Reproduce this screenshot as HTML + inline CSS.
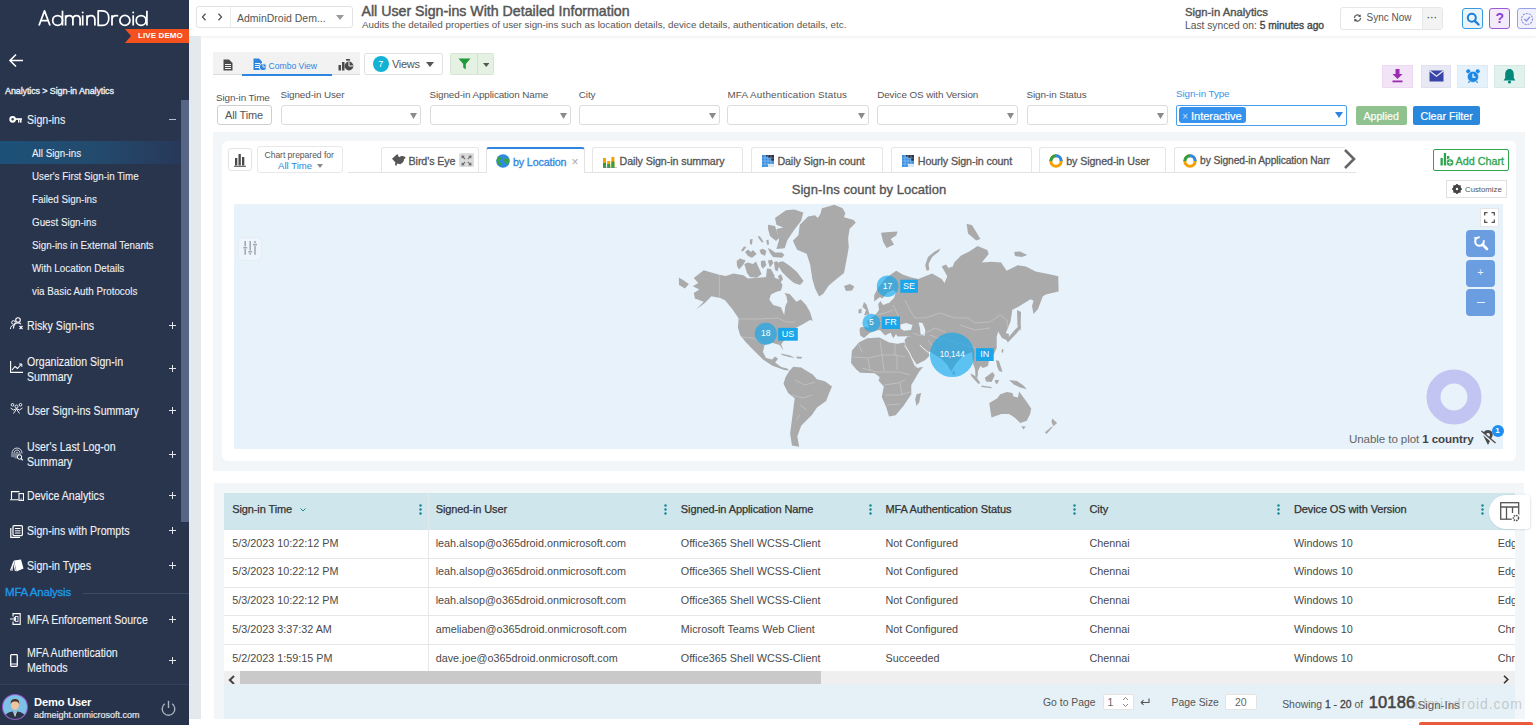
<!DOCTYPE html>
<html><head><meta charset="utf-8">
<style>
*{box-sizing:border-box;margin:0;padding:0}
html,body{width:1536px;height:725px;overflow:hidden;background:#fff;font-family:"Liberation Sans",sans-serif;color:#333}
.a{position:absolute;white-space:nowrap}
#sb{position:absolute;left:0;top:0;width:189px;height:725px;background:#29354d;color:#f2f4f7}
#sb .mi{position:absolute;left:27px;margin-top:1px;font-size:12.5px;transform:scaleX(0.848);transform-origin:0 0;color:#f0f2f5;line-height:15px;-webkit-text-stroke:0.1px #f0f2f5}
#sb .si{position:absolute;left:32px;font-size:11.7px;transform:scaleX(0.84);transform-origin:0 0;color:#eef1f5;line-height:12px;-webkit-text-stroke:0.1px #eef1f5}
#sb .pl{position:absolute;left:168.8px;width:7px;height:7px;margin-top:0.5px}
#sb .pl:before{content:"";position:absolute;left:0;top:3px;width:7px;height:1px;background:#e3e6ec}
#sb .pl:after{content:"";position:absolute;left:3px;top:0;width:1px;height:7px;background:#e3e6ec}
#sb svg.ic{position:absolute;left:9px}

.fl{font-size:9.9px;color:#555;line-height:12px;letter-spacing:-0.1px}
.dd{top:105.4px;height:20px;border:1px solid #dcdcdc;border-radius:3px;background:#fff}

.tt{font-size:10.7px;line-height:12px;letter-spacing:-0.1px}

.th{font-size:11px;color:#333;-webkit-text-stroke:0.25px #333;line-height:12px;letter-spacing:-0.1px}
.td{font-size:10.8px;color:#4a4a4a;line-height:13px;margin-top:-0.8px}
.ft{font-size:10.4px;color:#555;line-height:12px;margin-top:0.8px}
</style></head><body>

<!-- SIDEBAR -->
<div id="sb">
  <svg class="a" style="left:0;top:0" width="189" height="30" viewBox="0 0 189 30"><g fill="none" stroke="#fff" stroke-width="1.75" stroke-linecap="butt" stroke-linejoin="round">
<path d="M39 25.5 L44.5 10.9 L50 25.5 M41.2 20.5 H47.8"/>
<circle cx="57.6" cy="20.45" r="4.9"/><path d="M62.5 10.7 V25.5"/>
<path d="M65.6 15.2 V25.5 M65.6 19.6 C65.6 16.9 67.2 15.5 69.3 15.5 C71.4 15.5 72.9 16.9 72.9 19.6 V25.5 M72.9 19.6 C72.9 16.9 74.5 15.5 76.5 15.5 C78.6 15.5 80.1 16.9 80.1 19.6 V25.5"/>
<path d="M82.7 15.3 V25.5"/>
<path d="M87 15.3 V25.5 M87 19.8 C87 17 88.8 15.5 91 15.5 C93.3 15.5 94.9 17 94.9 19.8 V25.5"/>
<path d="M98.2 10.9 V25.4 H102.3 C106.4 25.4 108.8 22.4 108.8 18.15 C108.8 13.9 106.4 10.9 102.3 10.9 Z"/>
<path d="M112 15.3 V25.5 M112 19.6 C112 17 113.8 15.5 116 15.5 L118.2 15.8"/>
<circle cx="124.9" cy="20.45" r="5"/>
<path d="M133.2 15.3 V25.5"/>
<circle cx="141.1" cy="20.45" r="4.9"/><path d="M146.9 10.7 V25.5"/>
</g><circle cx="82.7" cy="12.6" r="1" fill="#fff"/><circle cx="133.2" cy="12.6" r="1" fill="#fff"/></svg>
  <svg class="a" style="left:125px;top:29px" width="64" height="14"><polygon points="0,0 64,0 64,14 0,14 6,7" fill="#f4511e"/></svg>
  <div class="a" style="left:138px;top:31px;font-size:8px;font-weight:700;color:#fff;line-height:10px;letter-spacing:0.1px">LIVE DEMO</div>
  <svg class="a" style="left:8px;top:53px" width="16" height="15" viewBox="0 0 16 15"><path d="M8 1.5 L2 7.5 L8 13.5 M2 7.5 H15" stroke="#fff" stroke-width="1.6" fill="none"/></svg>
  <div class="a" style="left:5px;top:85.5px;font-size:9px;font-weight:400;-webkit-text-stroke:0.35px #e9edf2;color:#e9edf2;letter-spacing:-0.12px;line-height:10px">Analytics &gt; Sign-in Analytics</div>
  <!-- scrollbar -->
  <div class="a" style="left:181px;top:100px;width:8px;height:422px;background:#566583"></div>

  <!-- Sign-ins -->
  <svg class="a" style="left:0;top:110px" width="30" height="16" viewBox="0 110 30 16"><circle cx="12.65" cy="119.35" r="2.3" fill="none" stroke="#fff" stroke-width="2.1"/><rect x="14.8" y="118.2" width="7.1" height="1.7" fill="#fff"/><rect x="18" y="119.5" width="1.4" height="3.1" fill="#fff"/><rect x="20" y="119.5" width="1.5" height="3.1" fill="#fff"/></svg>
  <div class="mi" style="top:112px">Sign-ins</div>
  <div class="a" style="left:168.5px;top:118.8px;width:7.5px;height:1.1px;background:#b9bfca"></div>
  <div class="a" style="left:0;top:141px;width:181px;height:23px;background:linear-gradient(90deg,#1d5179 0%,#234a6c 55%,#28385a 100%)"></div>
  <div class="si" style="top:147px">All Sign-ins</div>
  <div class="si" style="top:170px">User's First Sign-in Time</div>
  <div class="si" style="top:193px">Failed Sign-ins</div>
  <div class="si" style="top:216px">Guest Sign-ins</div>
  <div class="si" style="top:239px">Sign-ins in External Tenants</div>
  <div class="si" style="top:262px">With Location Details</div>
  <div class="si" style="top:285px">via Basic Auth Protocols</div>

  <div class="mi" style="top:318px">Risky Sign-ins</div>
  <div class="pl" style="top:321px"></div>
  <div class="mi" style="top:353.7px">Organization Sign-in<br>Summary</div>
  <div class="pl" style="top:364px"></div>
  <div class="mi" style="top:403px">User Sign-ins Summary</div>
  <div class="pl" style="top:406px"></div>
  <div class="mi" style="top:439.3px">User's Last Log-on<br>Summary</div>
  <div class="pl" style="top:450px"></div>
  <div class="mi" style="top:488px">Device Analytics</div>
  <div class="pl" style="top:491px"></div>
  <div class="mi" style="top:523px">Sign-ins with Prompts</div>
  <div class="pl" style="top:526px"></div>
  <div class="mi" style="top:558px">Sign-in Types</div>
  <div class="pl" style="top:561px"></div>
  <div class="a" style="left:5px;top:585px;font-size:11.5px;color:#1e9bea;-webkit-text-stroke:0.3px #1e9bea;line-height:14px;letter-spacing:-0.2px">MFA Analysis</div>
  <div class="a" style="left:83px;top:593px;width:106px;height:1px;background:#3d4a63"></div>
  <div class="mi" style="top:612.2px">MFA Enforcement Source</div>
  <div class="pl" style="top:615px"></div>
  <div class="mi" style="top:645px">MFA Authentication<br>Methods</div>
  <div class="pl" style="top:656px"></div>

  <!-- footer -->
  <div class="a" style="left:0;top:684px;width:189px;height:41px;background:#27334b;border-top:1px solid #34405a"></div>
</div>


<!-- sidebar icons -->
<svg class="a" style="left:10px;top:317px" width="14" height="13" viewBox="0 0 14 13"><circle cx="8" cy="3" r="2.3" fill="none" stroke="#fff" stroke-width="1.1"/><path d="M3.5 11.5 C3.5 7.5 5.5 6 8 6 C9.5 6 10.5 6.5 11 7.2" fill="none" stroke="#fff" stroke-width="1.1"/><circle cx="3.5" cy="5.5" r="1.8" fill="none" stroke="#fff" stroke-width="1"/><path d="M0.5 12 C0.5 9.5 1.8 8.5 3.5 8.5" fill="none" stroke="#fff" stroke-width="1"/><path d="M9.5 9 L12.5 12 M12.5 9 L9.5 12" stroke="#fff" stroke-width="1.1"/></svg>
<svg class="a" style="left:10px;top:361px" width="13" height="12" viewBox="0 0 13 12"><path d="M0.6 0 V11.4 H13" stroke="#fff" stroke-width="1.1" fill="none"/><path d="M2 9 L5 5.5 L7.5 7.5 L11.5 3" stroke="#fff" stroke-width="1.1" fill="none"/><path d="M9 3 H11.8 V5.8" stroke="#fff" stroke-width="1" fill="none"/></svg>
<svg class="a" style="left:10px;top:403px" width="13" height="11" viewBox="0 0 13 11"><circle cx="2.5" cy="1.8" r="1.3" fill="none" stroke="#fff" stroke-width="0.9"/><circle cx="6.5" cy="3.5" r="1.5" fill="none" stroke="#fff" stroke-width="0.9"/><circle cx="10.5" cy="1.8" r="1.3" fill="none" stroke="#fff" stroke-width="0.9"/><path d="M0.5 5 L3.5 7 L6.5 5.5 L9.5 7 L12.5 5 M3.5 10.5 L6.5 6 L9.5 10.5" stroke="#fff" stroke-width="0.9" fill="none"/></svg>
<svg class="a" style="left:10.5px;top:446.5px" width="12" height="14" viewBox="0 0 12 14"><path d="M6 1 C3 1 1 3.5 1 6.5 V10 M3 10.5 V6.5 C3 4.5 4.3 3 6 3 C7.7 3 9 4.5 9 6.5 V9 M5 11.5 V6.5 C5 5.7 5.5 5 6 5 C6.5 5 7 5.7 7 6.5 V10 M11 6.5 C11 3.5 9 1 6 1" stroke="#dfe3ea" stroke-width="0.9" fill="none"/><circle cx="8.5" cy="10" r="2.2" fill="#29354d" stroke="#fff" stroke-width="1"/><path d="M10 11.5 L11.8 13.3" stroke="#fff" stroke-width="1.2"/></svg>
<svg class="a" style="left:9.5px;top:491px" width="14" height="10" viewBox="0 0 14 10"><path d="M1.5 8 V0.6 H9.5 M0 8.8 H8.5" stroke="#fff" stroke-width="1.1" fill="none"/><rect x="9" y="2.6" width="4.5" height="6.8" fill="none" stroke="#fff" stroke-width="1.1"/><path d="M10.5 8 H12" stroke="#fff" stroke-width="0.8"/></svg>
<svg class="a" style="left:10px;top:525px" width="13" height="13" viewBox="0 0 13 13"><rect x="3" y="0.6" width="9.4" height="10" rx="1" fill="none" stroke="#fff" stroke-width="1.2"/><path d="M5 3.5 H10.5 M5 5.8 H10.5 M5 8 H10.5" stroke="#fff" stroke-width="1"/><path d="M0.8 3 V12.4 H10" stroke="#fff" stroke-width="1.2" fill="none"/></svg>
<svg class="a" style="left:9.5px;top:559px" width="14" height="13" viewBox="0 0 14 13"><path d="M4 1.5 L11 0.5 L13.5 9.5 L6.5 12.5Z" fill="#fff"/><path d="M0.5 11.5 L3.5 3.5 L5.5 12" stroke="#fff" stroke-width="1.1" fill="none"/><path d="M2 12 L2.8 7" stroke="#fff" stroke-width="0.8"/></svg>
<svg class="a" style="left:9.5px;top:612.5px" width="11" height="12" viewBox="0 0 11 12"><path d="M3 3.5 V0.6 H10.2 V11.4 H3 V8.5" stroke="#fff" stroke-width="1.1" fill="none"/><path d="M0 6 H5.5 M3.8 4.2 L5.7 6 L3.8 7.8" stroke="#fff" stroke-width="1.1" fill="none"/><rect x="5.5" y="3.5" width="2.5" height="5" fill="none" stroke="#fff" stroke-width="0.8"/></svg>
<svg class="a" style="left:9.5px;top:653.5px" width="8" height="13" viewBox="0 0 8 13"><rect x="0.7" y="0.7" width="6.6" height="11.6" rx="0.8" fill="none" stroke="#fff" stroke-width="1.3"/><path d="M0.7 10 H7.3" stroke="#fff" stroke-width="1"/></svg>
<!-- sidebar footer -->
<svg class="a" style="left:1px;top:693px" width="28" height="28" viewBox="0 0 28 28"><defs><clipPath id="av"><circle cx="14" cy="14" r="12"/></clipPath></defs><circle cx="14" cy="14" r="13" fill="#9a57c9"/><circle cx="14" cy="14" r="12" fill="#7dc1e6"/><g clip-path="url(#av)"><path d="M3 28 C3 20 8 18.5 14 18.5 C20 18.5 25 20 25 28Z" fill="#2b3447"/><path d="M12 18.5 L14 24 L16 18.5Z" fill="#fff"/><path d="M13.4 19 L14 23 L14.6 19Z" fill="#3a6db0"/><ellipse cx="14" cy="12" rx="4" ry="5" fill="#f0c4a0"/><path d="M9.8 11 C9.5 7 11.5 6 14 6 C16.5 6 18.5 7 18.2 11 C17.5 9 16 8.5 14 8.5 C12 8.5 10.5 9 9.8 11Z" fill="#4a3322"/></g></svg>
<div class="a" style="left:34px;top:695.5px;font-size:11.2px;font-weight:700;color:#fff;line-height:12px;letter-spacing:-0.2px">Demo User</div>
<div class="a" style="left:34px;top:710px;font-size:9px;color:#e3e7ee;-webkit-text-stroke:0.2px #e3e7ee;line-height:10px;letter-spacing:0px">admeight.onmicrosoft.com</div>
<svg class="a" style="left:160px;top:700px" width="17" height="17" viewBox="0 0 17 17"><path d="M4.8 3.8 A6.3 6.3 0 1 0 12.2 3.8" stroke="#a9b1bf" stroke-width="1.4" fill="none"/><path d="M8.5 0.8 V8" stroke="#a9b1bf" stroke-width="1.4"/></svg>

<!-- TOPBAR -->
<div class="a" style="left:189px;top:0;width:1347px;height:36px;background:#fff;box-shadow:0 1px 3px rgba(0,0,0,.08)"></div>
<div class="a" style="left:189px;top:36px;width:12px;height:682.8px;background:#e3e9ec"></div>


<!-- TOPBAR CONTENT -->
<div class="a" style="left:195.5px;top:6px;width:157px;height:22px;border:1px solid #e3e3e3;border-radius:3px;background:#fff"></div>
<div class="a" style="left:229.5px;top:7px;width:1px;height:20px;background:#ececec"></div>
<svg class="a" style="left:201px;top:13px" width="6" height="8" viewBox="0 0 6 8"><path d="M4.5 0.8 L1.5 4 L4.5 7.2" stroke="#555" stroke-width="1.3" fill="none"/></svg>
<svg class="a" style="left:217px;top:13px" width="6" height="8" viewBox="0 0 6 8"><path d="M1.5 0.8 L4.5 4 L1.5 7.2" stroke="#555" stroke-width="1.3" fill="none"/></svg>
<div class="a" style="left:237px;top:12px;font-size:10.5px;color:#555;line-height:12px">AdminDroid Dem...</div>
<svg class="a" style="left:336px;top:15px" width="8" height="5"><polygon points="0,0 8,0 4,5" fill="#9a9a9a"/></svg>
<div class="a" style="left:361.5px;top:3px;font-size:14.2px;font-weight:400;-webkit-text-stroke:0.45px #555;color:#555;line-height:16px;letter-spacing:0px">All User Sign-ins With Detailed Information</div>
<div class="a" style="left:362px;top:20px;font-size:9.82px;color:#555;line-height:11px;letter-spacing:0px;margin-top:-0.6px">Audits the detailed properties of user sign-ins such as location details, device details, authentication details, etc.</div>

<div class="a" style="left:1185px;top:5.8px;font-size:11.3px;font-weight:400;-webkit-text-stroke:0.4px #555;color:#555;line-height:13px;letter-spacing:0px">Sign-in Analytics</div>
<div class="a" style="left:1185px;top:20.3px;font-size:10.25px;color:#555;line-height:12px">Last synced on: <span style="-webkit-text-stroke:0.35px #444;color:#444">5 minutes ago</span></div>
<div class="a" style="left:1339.5px;top:7px;width:103px;height:22.5px;border:1px solid #e6e6e6;border-radius:3px;background:#fff"></div>
<div class="a" style="left:1421.5px;top:8px;width:20px;height:20.5px;background:#f3f3f3;border-left:1px solid #e8e8e8"></div>
<svg class="a" style="left:1353px;top:13px" width="9" height="10" viewBox="0 0 9 10"><path d="M7.5 5 A3 3 0 0 1 2 6.8 M1.5 5 A3 3 0 0 1 7 3.2" stroke="#555" stroke-width="1.2" fill="none"/><polygon points="7.5,1.2 7.8,4.2 5,3.6" fill="#555"/><polygon points="1.5,8.8 1.2,5.8 4,6.4" fill="#555"/></svg>
<div class="a" style="left:1366.5px;top:12px;font-size:10px;color:#555;line-height:12px">Sync Now</div>
<div class="a" style="left:1427px;top:14px;font-size:9px;font-weight:700;color:#555;line-height:8px;letter-spacing:0.5px">&middot;&middot;&middot;</div>
<div class="a" style="left:1462px;top:8.2px;width:20.7px;height:20.7px;border:1px solid #3a9ad9;border-radius:3px;background:#e9f4fb"></div>
<svg class="a" style="left:1465.5px;top:11.5px" width="14" height="14" viewBox="0 0 14 14"><circle cx="5.8" cy="5.8" r="4" stroke="#1e7fd6" stroke-width="2" fill="none"/><path d="M8.8 8.8 L12.5 12.5" stroke="#1e7fd6" stroke-width="2.4" stroke-linecap="round"/></svg>
<div class="a" style="left:1489.3px;top:8.2px;width:20.7px;height:20.7px;border:1px solid #9b59d6;border-radius:3px;background:#f3ebfb"></div>
<div class="a" style="left:1495.5px;top:10px;font-size:14px;font-weight:700;color:#8e3fd0;line-height:16px">?</div>
<div class="a" style="left:1516.7px;top:8.2px;width:21px;height:20.7px;border:1px solid #9aa0e8;border-radius:3px;background:#f1f1fc"></div>
<svg class="a" style="left:1520px;top:12px" width="14" height="14" viewBox="0 0 14 14"><circle cx="7" cy="7" r="5.5" stroke="#8c93e3" stroke-width="1.1" fill="none" stroke-dasharray="2 1"/><path d="M4.3 7 L6.3 9 L9.8 5" stroke="#8c93e3" stroke-width="1.3" fill="none"/></svg>

<!-- VIEW TABS -->
<div class="a" style="left:213px;top:52px;width:147px;height:23px;background:#f2f2f2;border-bottom:1px solid #dcdcdc"></div>
<div class="a" style="left:242px;top:73.5px;width:90px;height:2px;background:#2f86e0"></div>
<svg class="a" style="left:223px;top:58.5px" width="10" height="12" viewBox="0 0 10 12"><path d="M0.5 0.5 H6 L9.5 4 V11.5 H0.5Z" fill="#4a4a4a"/><path d="M2 5.5 H8 M2 7.5 H8 M2 9.5 H8" stroke="#f2f2f2" stroke-width="1"/></svg>
<svg class="a" style="left:252.5px;top:58px" width="14" height="13" viewBox="0 0 14 13"><path d="M0.5 0.5 H6 L9 3.5 V12 H0.5Z" fill="#2f86e0"/><path d="M2 5.5 H7 M2 7.5 H6 M2 9.5 H6" stroke="#f2f2f2" stroke-width="1"/><circle cx="10" cy="9" r="3.7" fill="#2f86e0" stroke="#f2f2f2" stroke-width="1"/><path d="M10 9 V6 M10 9 H13" stroke="#f2f2f2" stroke-width="0.9"/></svg>
<div class="a" style="left:268.5px;top:61px;font-size:8.6px;color:#2f86e0;line-height:10px">Combo View</div>
<svg class="a" style="left:338px;top:58px" width="16" height="13" viewBox="0 0 16 13"><rect x="0.5" y="7" width="2.5" height="5.5" fill="#4a4a4a"/><rect x="4" y="4" width="2.5" height="8.5" fill="#4a4a4a"/><circle cx="11" cy="8" r="4.4" fill="#4a4a4a"/><path d="M11 8 V4 M11 8 H15" stroke="#f2f2f2" stroke-width="1"/><rect x="8" y="1" width="4" height="1.6" fill="#4a4a4a"/></svg>

<div class="a" style="left:363.5px;top:52.5px;width:79px;height:22.5px;border:1px solid #e2e2e2;border-radius:2px;background:#fff"></div>
<div class="a" style="left:372.5px;top:55.5px;width:16.5px;height:16.5px;border-radius:50%;background:#13b2d4;color:#fff;font-size:9px;text-align:center;line-height:16.5px">7</div>
<div class="a" style="left:392px;top:57px;font-size:11px;color:#555;line-height:13px;letter-spacing:-0.3px;margin-top:0.8px">Views</div>
<svg class="a" style="left:425.5px;top:61.5px" width="8" height="5"><polygon points="0,0 8,0 4,5" fill="#555"/></svg>

<div class="a" style="left:450px;top:53.3px;width:43.5px;height:21.5px;border:1px solid #d6e6d3;border-radius:2px;background:#e5f1e3"></div>
<div class="a" style="left:477.3px;top:54px;width:1px;height:20px;background:#d3e2d0"></div>
<svg class="a" style="left:457.5px;top:57.5px" width="13" height="12" viewBox="0 0 13 12"><path d="M0.5 0.5 H12.5 L7.8 6 V11.5 L5.2 9.5 V6 Z" fill="#1f9a3a"/></svg>
<svg class="a" style="left:482.5px;top:63px" width="6.5" height="4"><polygon points="0,0 6.5,0 3.25,4" fill="#555"/></svg>

<!-- ACTION ICONS -->
<div class="a" style="left:1381.5px;top:64.5px;width:31.5px;height:23px;background:#f2e4f6;border:1px solid #ecdaf1"></div>
<svg class="a" style="left:1391px;top:69px" width="13" height="14" viewBox="0 0 13 14"><path d="M4.5 0 H8.5 V5 H11.5 L6.5 10 L1.5 5 H4.5Z" fill="#9b2bb0"/><rect x="1.5" y="11.5" width="10" height="1.8" fill="#9b2bb0"/></svg>
<div class="a" style="left:1421px;top:64.5px;width:30px;height:23px;background:#e8e9f5;border:1px solid #dfe1f0"></div>
<svg class="a" style="left:1428.5px;top:70px" width="15" height="12" viewBox="0 0 15 12"><rect x="0.5" y="0.5" width="14" height="11" fill="#3a45a8"/><path d="M0.5 0.8 L7.5 6.2 L14.5 0.8" stroke="#e8e9f5" stroke-width="1.3" fill="none"/></svg>
<div class="a" style="left:1457.3px;top:64.5px;width:30.7px;height:23px;background:#e5f1fb;border:1px solid #dbeaf6"></div>
<svg class="a" style="left:1465.5px;top:68.8px" width="14" height="14.5" viewBox="0 0 14 14.5"><circle cx="2.3" cy="2.3" r="2.1" fill="#1e88e5"/><circle cx="11.7" cy="2.3" r="2.1" fill="#1e88e5"/><path d="M2.5 13.8 L4 11.5 M11.5 13.8 L10 11.5" stroke="#1e88e5" stroke-width="1.3"/><circle cx="7" cy="7.8" r="5.6" fill="#1e88e5" stroke="#e5f1fb" stroke-width="0.6"/><path d="M7 4.8 V8.2 H9.5" stroke="#fff" stroke-width="1.2" fill="none"/></svg>
<div class="a" style="left:1494.2px;top:64.5px;width:30.5px;height:23px;background:#e1f1ee;border:1px solid #d6e9e5"></div>
<svg class="a" style="left:1503px;top:68px" width="13" height="16" viewBox="0 0 13 16"><path d="M6.5 1 C3.5 1 2.2 3.5 2.2 6.5 V10 L0.6 12.5 H12.4 L10.8 10 V6.5 C10.8 3.5 9.5 1 6.5 1Z" fill="#00897b"/><circle cx="6.5" cy="14" r="1.6" fill="#00897b"/></svg>


<!-- FILTERS -->
<div class="a fl" style="left:216px;top:91.5px">Sign-in Time</div>
<div class="a" style="left:216.5px;top:105.4px;width:55px;height:20px;border:1px solid #cfcfcf;border-radius:3px;background:#fff"></div>
<div class="a" style="left:225px;top:109px;font-size:11px;color:#555;line-height:13px;letter-spacing:-0.15px">All Time</div>
<div class="a fl" style="left:280.5px;top:89px">Signed-in User</div>
<div class="a dd" style="left:280.5px;width:140.8px"></div>
<svg class="a" style="left:410.3px;top:112.5px" width="7" height="6"><polygon points="0,0 7,0 3.5,6" fill="#8a8a8a"/></svg>
<div class="a fl" style="left:429.5px;top:89px">Signed-in Application Name</div>
<div class="a dd" style="left:429.5px;width:141.0px"></div>
<svg class="a" style="left:559.5px;top:112.5px" width="7" height="6"><polygon points="0,0 7,0 3.5,6" fill="#8a8a8a"/></svg>
<div class="a fl" style="left:578.75px;top:89px">City</div>
<div class="a dd" style="left:578.75px;width:140.9px"></div>
<svg class="a" style="left:708.6px;top:112.5px" width="7" height="6"><polygon points="0,0 7,0 3.5,6" fill="#8a8a8a"/></svg>
<div class="a fl" style="left:727.4px;top:89px;letter-spacing:0.18px">MFA Authentication Status</div>
<div class="a dd" style="left:727.4px;width:142.0px"></div>
<svg class="a" style="left:858.4px;top:112.5px" width="7" height="6"><polygon points="0,0 7,0 3.5,6" fill="#8a8a8a"/></svg>
<div class="a fl" style="left:877.2px;top:89px">Device OS with Version</div>
<div class="a dd" style="left:877.2px;width:140.8px"></div>
<svg class="a" style="left:1007.0px;top:112.5px" width="7" height="6"><polygon points="0,0 7,0 3.5,6" fill="#8a8a8a"/></svg>
<div class="a fl" style="left:1026.5px;top:89px">Sign-in Status</div>
<div class="a dd" style="left:1026.5px;width:141.4px"></div>
<svg class="a" style="left:1156.9px;top:112.5px" width="7" height="6"><polygon points="0,0 7,0 3.5,6" fill="#8a8a8a"/></svg>

<div class="a fl" style="left:1176px;top:88px;color:#3d95e8">Sign-in Type</div>
<div class="a" style="left:1175.7px;top:104.5px;width:171px;height:21.5px;border:1px solid #4a9fe8;border-radius:2px;background:#fff"></div>
<div class="a" style="left:1179px;top:106.8px;width:66.5px;height:16.2px;border-radius:3px;background:#3591ee"></div>
<div class="a" style="left:1182.3px;top:110.5px;font-size:10px;color:#cfe3fb;line-height:11px">&times;</div>
<div class="a" style="left:1191px;top:109px;font-size:11.2px;color:#fff;-webkit-text-stroke:0.2px #fff;line-height:12px;letter-spacing:-0.1px;margin-top:0.6px">Interactive</div>
<svg class="a" style="left:1334.5px;top:111.5px" width="8" height="6"><polygon points="0,0 8,0 4,6" fill="#2f86e0"/></svg>
<div class="a" style="left:1356px;top:105.5px;width:51px;height:19.5px;border-radius:2px;background:#8fc28e"></div>
<div class="a" style="left:1363.5px;top:109px;font-size:10.6px;color:#fff;-webkit-text-stroke:0.2px #fff;line-height:12px;margin-top:0.6px">Applied</div>
<div class="a" style="left:1413.3px;top:105.5px;width:66.7px;height:19.5px;border-radius:2px;background:#2a88dc"></div>
<div class="a" style="left:1420.5px;top:109px;font-size:10.7px;color:#fff;-webkit-text-stroke:0.2px #fff;line-height:12px;margin-top:0.6px">Clear Filter</div>


<!-- CHART PANEL -->
<div class="a" style="left:213px;top:132px;width:1312px;height:338.5px;background:#f3f6f8"></div>
<div class="a" style="left:222px;top:141.4px;width:1293.5px;height:320px;background:#fff;border-radius:6px"></div>
<div class="a" style="left:228.3px;top:148.3px;width:24px;height:22.3px;border:1px solid #e4e4e4;border-radius:3px;background:#fff"></div>
<svg class="a" style="left:234px;top:152.5px" width="13" height="14" viewBox="0 0 13 14"><rect x="1" y="5" width="2.3" height="7.5" fill="#4a4a4a"/><rect x="4.5" y="1" width="2.3" height="11.5" fill="#4a4a4a"/><rect x="8" y="4" width="2.3" height="8.5" fill="#4a4a4a"/><rect x="0" y="12.8" width="12" height="1" fill="#4a4a4a"/></svg>
<div class="a" style="left:257.2px;top:145.5px;width:85.6px;height:27.2px;border:1px solid #e8e8e8;border-radius:3px;background:#fff"></div>
<div class="a" style="left:264.5px;top:150px;font-size:8.6px;color:#555;line-height:10px;letter-spacing:-0.05px">Chart prepared for</div>
<div class="a" style="left:278px;top:159.5px;font-size:9.6px;color:#2f86e0;line-height:11px">All Time</div>
<svg class="a" style="left:316.6px;top:163.5px" width="6" height="4"><polygon points="0,0 6,0 3,4" fill="#8a8a8a"/></svg>
<div class="a" style="left:348px;top:171.5px;width:1008px;height:1px;background:#e3e3e3"></div>
<div class="a" style="left:381.4px;top:147.3px;width:97.2px;height:24.5px;background:#fff;border:1px solid #e6e6e6;border-bottom:none;border-radius:3px 3px 0 0"></div>
<svg class="a" style="left:391.5px;top:153.6px" width="14" height="13" viewBox="0 0 14 13"><path d="M0 4.7 L5.3 0 L7 3.2 C8.5 2.5 9.5 2 10.5 2.1 L12.3 2.6 L13.8 3.8 L12 5.3 C12 7 11.5 8.5 8.2 10.2 L5.3 9.6 L4.1 12.3 L2.9 10.2 L3.5 8.4 C2.5 7.8 1.8 6.5 0 4.7Z" fill="#555"/></svg>
<div class="a tt" style="left:408.6px;top:154.5px;color:#555;-webkit-text-stroke:0.3px #555">Bird's Eye</div>
<div class="a" style="left:486px;top:147px;width:98.5px;height:25.5px;background:#fff;border:1px solid #e3e3e3;border-top:2.5px solid #2f86e0;border-bottom:none;border-radius:3px 3px 0 0"></div>
<svg class="a" style="left:495.9px;top:154px" width="14" height="14" viewBox="0 0 14 14"><circle cx="7" cy="7" r="6.8" fill="#2d8be6"/><path d="M3 2.2 C4.5 3 5.5 3.5 5 5.2 C4 6 3.5 7.2 4.5 8.5 C5.5 9.5 5 11 4.5 12.2 C2.5 11 0.8 9 0.5 6.5 C1 4.5 1.8 3 3 2.2Z M8.5 4 C10 4 11 5 12.5 4.5 C13.3 6.5 13 9 11.5 11 C10.5 10.5 9.8 9 9 8.5 C8 8 7.5 6.5 8.5 4Z" fill="#3aa34a"/></svg>
<div class="a tt" style="left:512.9px;top:155.5px;color:#2f86e0;-webkit-text-stroke:0.3px #2f86e0">by Location</div>
<div class="a" style="left:592.2px;top:147.3px;width:151.3px;height:24.5px;background:#fff;border:1px solid #e6e6e6;border-bottom:none;border-radius:3px 3px 0 0"></div>
<svg class="a" style="left:602.6px;top:155px" width="14" height="13" viewBox="0 0 14 13"><rect x="0" y="3" width="3" height="10" fill="#f59f00"/><rect x="0" y="8" width="3" height="5" fill="#2f9e44"/><rect x="4.2" y="6" width="3" height="7" fill="#f59f00"/><rect x="4.2" y="9" width="3" height="4" fill="#2f9e44"/><rect x="8.4" y="2" width="3" height="11" fill="#f59f00"/><rect x="8.4" y="6.5" width="3" height="6.5" fill="#2f9e44"/><rect x="0" y="12.5" width="14" height="0.5" fill="#888"/></svg>
<div class="a tt" style="left:619.6px;top:154.5px;color:#555;-webkit-text-stroke:0.3px #555">Daily Sign-in summary</div>
<div class="a" style="left:750.6px;top:147.3px;width:132.8px;height:24.5px;background:#fff;border:1px solid #e6e6e6;border-bottom:none;border-radius:3px 3px 0 0"></div>
<svg class="a" style="left:761.9px;top:154.7px" width="12" height="12" viewBox="0 0 12 12"><rect width="12" height="12" fill="#d5e6f5"/><path d="M0 0 H12 V9 H6 V12 H0Z" fill="#3b8fe0"/><path d="M4 0 H12 V6 H9 V3 H6 V1.5 H4Z" fill="#27354a"/><path d="M0 3 H12 M0 6 H12 M0 9 H12 M3 0 V12 M6 0 V12 M9 0 V12" stroke="#fff" stroke-width="0.4" opacity="0.7"/></svg>
<div class="a tt" style="left:777.4px;top:154.5px;color:#555;-webkit-text-stroke:0.3px #555">Daily Sign-in count</div>
<div class="a" style="left:890.7px;top:147.3px;width:141.3px;height:24.5px;background:#fff;border:1px solid #e6e6e6;border-bottom:none;border-radius:3px 3px 0 0"></div>
<svg class="a" style="left:902.3px;top:154.7px" width="12" height="12" viewBox="0 0 12 12"><rect width="12" height="12" fill="#d5e6f5"/><path d="M0 0 H12 V9 H6 V12 H0Z" fill="#3b8fe0"/><path d="M4 0 H12 V6 H9 V3 H6 V1.5 H4Z" fill="#27354a"/><path d="M0 3 H12 M0 6 H12 M0 9 H12 M3 0 V12 M6 0 V12 M9 0 V12" stroke="#fff" stroke-width="0.4" opacity="0.7"/></svg>
<div class="a tt" style="left:917.8px;top:154.5px;color:#555;-webkit-text-stroke:0.3px #555">Hourly Sign-in count</div>
<div class="a" style="left:1039.4px;top:147.3px;width:126.8px;height:24.5px;background:#fff;border:1px solid #e6e6e6;border-bottom:none;border-radius:3px 3px 0 0"></div>
<svg class="a" style="left:1049.2px;top:154px" width="14" height="14" viewBox="0 0 14 14"><circle cx="7" cy="7" r="5.2" fill="none" stroke="#f59f00" stroke-width="3"/><path d="M7 1.8 A5.2 5.2 0 0 1 12.2 7" fill="none" stroke="#2d8be6" stroke-width="3"/><path d="M1.8 7 A5.2 5.2 0 0 1 7 1.8" fill="none" stroke="#2f9e44" stroke-width="3"/></svg>
<div class="a tt" style="left:1066.25px;top:154.5px;color:#555;-webkit-text-stroke:0.3px #555">by Signed-in User</div>
<div class="a" style="left:1173.5px;top:147.3px;width:171.5px;height:24.5px;background:#fff;border:1px solid #e6e6e6;border-bottom:none;border-right:none;border-radius:3px 0 0 0;overflow:hidden"></div>
<svg class="a" style="left:1183.0px;top:154px" width="14" height="14" viewBox="0 0 14 14"><circle cx="7" cy="7" r="5.2" fill="none" stroke="#f59f00" stroke-width="3"/><path d="M7 1.8 A5.2 5.2 0 0 1 12.2 7" fill="none" stroke="#2d8be6" stroke-width="3"/><path d="M1.8 7 A5.2 5.2 0 0 1 7 1.8" fill="none" stroke="#2f9e44" stroke-width="3"/></svg>
<div class="a" style="left:1200px;top:154.5px;width:130.3px;overflow:hidden;font-size:10.3px;color:#555;-webkit-text-stroke:0.3px #555;line-height:12px;letter-spacing:-0.1px">by Signed-in Application Name</div>

<div class="a" style="left:458.7px;top:153px;width:15px;height:14.2px;background:#dcdcdc;border-radius:2px"></div>
<svg class="a" style="left:460.5px;top:154.5px" width="11" height="11" viewBox="0 0 11 11"><path d="M1.2 1.2 L4.2 4.2 M9.8 1.2 L6.8 4.2 M9.8 9.8 L6.8 6.8 M1.2 9.8 L4.2 6.8" stroke="#6a6a6a" stroke-width="1.1"/><path d="M0.8 3.5 V0.8 H3.5 M7.5 0.8 H10.2 V3.5 M4.2 4.2 H1.8 V1.8 M6.8 4.2" stroke="none" fill="none"/><polygon points="0.5,0.5 3.8,0.8 0.8,3.8" fill="#6a6a6a"/><polygon points="10.5,0.5 7.2,0.8 10.2,3.8" fill="#6a6a6a"/><polygon points="10.5,10.5 7.2,10.2 10.2,7.2" fill="#6a6a6a"/><polygon points="0.5,10.5 3.8,10.2 0.8,7.2" fill="#6a6a6a"/></svg>
<div class="a" style="left:571.5px;top:156px;font-size:12px;color:#aaa;line-height:12px">&times;</div>
<svg class="a" style="left:1343px;top:148px" width="13" height="22" viewBox="0 0 13 22"><path d="M2 2 L11 11 L2 20" stroke="#666" stroke-width="2.6" fill="none"/></svg>

<div class="a" style="left:1433px;top:148.8px;width:76px;height:22px;border:1.3px solid #2ea44f;border-radius:2px;background:#fff"></div>
<svg class="a" style="left:1440px;top:152px" width="14" height="15" viewBox="0 0 14 15"><rect x="0.5" y="6" width="2.3" height="7.5" fill="#2ea44f"/><rect x="3.8" y="1" width="2.3" height="12.5" fill="#2ea44f"/><rect x="7" y="4" width="2.3" height="9.5" fill="#2ea44f"/><circle cx="10" cy="10.5" r="3.8" fill="#2ea44f" stroke="#fff" stroke-width="0.8"/><path d="M10 8.3 V12.7 M7.8 10.5 H12.2" stroke="#fff" stroke-width="1"/></svg>
<div class="a" style="left:1455.5px;top:154.5px;font-size:10.8px;color:#2ea44f;-webkit-text-stroke:0.3px #2ea44f;line-height:12px">Add Chart</div>
<div class="a" style="left:1445.5px;top:180.2px;width:61px;height:17.4px;border:1px solid #e0e0e0;background:#fff"></div>
<svg class="a" style="left:1451.5px;top:184px" width="10" height="10" viewBox="0 0 10 10"><circle cx="5" cy="5" r="3.2" fill="none" stroke="#444" stroke-width="2"/><path d="M5 0 V10 M0 5 H10 M1.5 1.5 L8.5 8.5 M8.5 1.5 L1.5 8.5" stroke="#444" stroke-width="1.6"/><circle cx="5" cy="5" r="1.2" fill="#fff"/></svg>
<div class="a" style="left:1465px;top:184.5px;font-size:7.8px;color:#555;line-height:9px">Customize</div>

<div class="a" style="left:791.7px;top:182.5px;font-size:13px;color:#555;-webkit-text-stroke:0.35px #555;line-height:14px;letter-spacing:0.05px">Sign-Ins count by Location</div>


<!-- MAP -->
<div class="a" style="left:234.2px;top:204.2px;width:1268.8px;height:245px;background:#e8f2fa"></div>
<svg class="a" style="left:0;top:0" width="1536" height="725" viewBox="0 0 1536 725">
<g fill="#aaaaaa">
<polygon points="760.9,261 765,260.5 766.4,265 763,268.8 761,266"/>
<polygon points="767.8,260.5 772,259.8 773.3,263 770,267.4"/>
<polygon points="774,262 777,261.2 779.5,264 777.5,271.6 775,270"/>
<polygon points="778,276 781,274.3 783,279 780,283.3"/>
<polygon points="796.3,356.4 802.4,357 801,358.7 797,358.5"/>
<polygon points="693.8,278.1 703.7,270.3 719.1,274.8 725.7,275.9 733.5,273.6 743.4,275.3 747.8,278.6 754.4,278.1 758.1,277.8 766,277 767,268.5 771,269 774.7,276 774.3,277.5 779,279.5 782.5,285 781,290.5 776,292 771,294.5 769.3,299.6 773.2,305.1 780.9,307.3 784.2,315 785.3,306.2 787.5,301.8 786.4,296.3 784.5,293 789.7,294.1 796.4,301.8 800.8,299.6 806,305 810,312 812.7,320.7 810,320 802.4,324.6 790.3,330.7 785.7,338.2 781.2,344.3 783.4,350.4 779.6,345.1 772,342.8 764.5,345.1 763,351.9 766,358 772,359.5 775.1,356.4 778.1,358.7 775.1,362.5 781.2,367.1 787.2,368.6 789,370.5 784.2,370.1 772,365.5 763,359.5 753.9,350.4 746.3,342.8 740.2,335.2 737.9,327.6 738.7,318.5 732.6,309.4 725,300.3 720.2,297.9 711.4,296.3 704.8,302.9 696,309.5 703.7,301.8 694.9,298.5 693.8,293 699.3,289.6 692.7,286.3 698.2,283"/>
<polygon points="793.3,366.8 801.2,367.5 813,374.7 816.9,379.2 824.8,381.2 832,386.5 828.7,394.3 826.1,400.9 817,407.4 811.7,415.3 805.1,421.8 801.2,425.8 797.3,436.3 799.2,446.7 792,445.4 790.1,433.6 792,419.2 794.7,398.2 788.1,393 783.5,383.8 785.5,377.3 789.4,370.7"/>
<polygon points="821.9,208.3 834.3,204.8 842.6,208.3 845.3,213.1 844,217.2 853.6,220 855.7,222.8 849.5,229 848.1,238.6 848.8,246.9 847.4,255.2 845.3,266.2 844,273.1 837.1,278.6 828.8,285.5 823.3,293.8 819.1,296.6 815,288.3 812.2,278.6 810.2,264.8 806.7,253.8 797.1,249.7 792.9,240.7 798.4,235.2 799.8,224.8 808.1,216.6 815,215.2 817.8,217.9 820.5,213.8"/>
<polygon points="775,217.9 786,210.3 794.3,209.4 803.3,212.4 801.2,220.7 794.3,229.7 787.4,240 784.7,248.3 776.4,249 779.1,240 776.4,229 783.3,227.6 776.4,224.8"/>
<polygon points="778.8,262 783,261.2 790,266 797,272 803.6,281 800,285 794,283 788,278 782,272 779,267"/>
<polygon points="744.3,264 748,262.6 753,264 756,261.5 758,266 761.6,274 757,277.8 750,277 747,273"/>
<polygon points="736.7,261 740,258.4 745.7,260.5 743,265 739,269.5 737,266"/>
<polygon points="768.1,224.8 775,226 779,238 776,241 770,236 768,229"/>
<polygon points="757.8,236 760,236.5 763.6,242 762,242.6 758.5,238"/>
<polygon points="766.4,240 768.5,239.8 769.1,244.5 767,244.7"/>
<polygon points="749.8,239.5 752.6,239 752,244.7 750,244"/>
<polygon points="741,250.5 744,246.5 746.4,247 743,251.6"/>
<polygon points="745,252 748,249.5 751,252 753,250 756.7,254 752,257.8 748,256"/>
<polygon points="759.5,250 763,248.8 766.4,251 765,255.7 761,254"/>
<polygon points="767.8,248 771,249.5 775,252.5 782,252.5 784.3,255 782,257.8 773,257 770,253"/>
<polygon points="678.9,277.5 683,280 688.8,284.1 685,288.5 679,285"/>
<polygon points="844,286 850,284 854.3,286.5 852,290.5 846,291"/>
<polygon points="864,302 866.5,304.5 868,309 869.5,314 864,315.5 866,310 862.5,307"/>
<polygon points="858.6,309.5 861.5,308.5 861.5,313 858.5,313.5"/>
<polygon points="860.2,335.5 859.5,329.3 861,327 869,327.5 867,321 872,317.5 876,314 879,310 878.3,304 880.5,301 883,305 886,304 889,300 887,296 882,298.5 880,297 874.3,301.4 874.1,295.5 878.3,287.3 886.6,277.6 896.2,270.7 903.1,274.8 911.4,277.6 918.3,279 925.2,276.2 932.1,273.5 941.7,279 944.5,283.1 947.3,276.2 941.7,266.6 945.9,264.5 948.6,268 952.8,266.6 954.2,262.4 961.1,255.5 969.3,251.4 977.6,245.9 987.3,250 988.7,254.1 981.8,262.4 991.4,261.7 1001.1,262.4 1006.6,270.7 1017.6,265.2 1025.9,266.6 1035.6,271.4 1049.4,274.2 1058.3,276.2 1058.6,291.6 1045.7,294.6 1042.7,296.5 1038,309 1033.5,314 1032,306 1033.6,300.7 1030.5,299.2 1018.4,306.8 1012.3,309.8 1010.5,321.7 1005.8,333.1 1009,334 1008.5,341 1002,338 998.1,331.4 996.7,336.9 996.7,347.9 993.5,355 989,360 988,366 983,368 980.5,366 978,371 977.5,378 975.5,376 975,369 973.3,364.5 971.9,352.1 962.2,356.2 955.3,364.5 951.2,371.4 947.1,364.5 941.6,359 929.8,351.4 929.1,356.2 925,360.3 916.7,364.5 911.2,356.2 905.7,345.2 904.5,340 907.5,336.5 913,336 897.5,336.5 896,334 893.3,338.3 890.5,332.8 885,335.5 880,330 876,330.5 869.7,333 864,338"/>
<polygon points="851.9,350.7 858.8,342.4 867.1,338.3 879.5,337.6 889.1,342.4 897.4,343.8 904.3,342.4 907,348 911,356 914.5,364 917,368 923.1,366.8 919,372 915.2,378.6 911.3,385.1 911.3,394.3 903.4,406.1 895.6,415.3 889,416.6 886.4,407.4 881.8,397 883.8,386.5 878.5,380.6 879.8,377.3 874.6,373.3 860.2,372.7 856.3,369.4 851,362.9"/>
<polygon points="916.5,394.3 921.1,393 919.2,402.2 916.5,406.1 915.2,399.6"/>
<polygon points="1020.2,324.5 1021,328 1016,334.1 1007.8,342.4 1006.4,339.7 1014.7,330"/>
<polygon points="1017,310 1021,312 1020.5,331 1017.5,326"/>
<polygon points="940.4,248.6 934.8,251.4 928,256.9 925.2,265.2 926.6,270.7 929.3,270 928.6,263.8 932.1,256.9 939,251.4"/>
<polygon points="881,232.8 889.3,232.1 897.6,231.4 896.2,235.5 890.7,239 894.1,244.5 886.6,247.9 883.1,241.7"/>
<polygon points="966.6,223.8 972.1,225.2 980.4,239 976.2,240.4 968,233.5"/>
<polygon points="1014.2,252 1020,251.4 1027.3,255 1022,256.9 1015,256"/>
<polygon points="989.3,403 997,398.6 1000.3,394.2 1006.9,392 1012.4,393.1 1013.5,396.4 1018,397.5 1019.1,391.4 1023.5,397.5 1026.8,401.9 1031.2,408.5 1030.1,414.1 1026.8,420.7 1020.2,422.9 1014.6,417.4 1009.1,414.1 1001.4,414.1 991.5,417.4 990.4,410.8"/>
<polygon points="1021.3,426.2 1025.7,426.5 1023.5,429.5"/>
<polygon points="1052.2,418.5 1057.1,422.9 1053.3,426.2 1051.5,422"/>
<polygon points="1053.3,426.2 1046.6,433.9 1045,432.3 1051.1,427.3"/>
<polygon points="1009.1,379.9 1016.9,381 1023.5,385.4 1026.8,389.2 1020.2,387.6 1013.5,384.3"/>
<polygon points="984.9,377.7 992.6,372.1 994.8,375.4 991.5,382.1 986,381.5"/>
<polygon points="970.5,373.2 976,376.5 980.4,383.2 978.2,383.7 971.6,376.5"/>
<polygon points="981.5,385.4 991.5,387 991.5,388.3 981.5,386.9"/>
<polygon points="994.8,379.9 999.2,380 997,384.3 995.5,383"/>
<polygon points="996,360 999,361 1002.5,372.1 999,371 997,366"/>
<polygon points="781,353.5 790,355.5 795,358 789,357 782,355"/>
<polygon points="953,371 955,372 954.5,375 952.5,374"/>
<polygon points="1002,349 1003.5,349.5 1003,353 1001.5,352"/>
</g>
<g fill="#e8f2fa">
<polygon points="900.5,324.5 906,323 912.5,325 911,330 904,330.8 900.5,328.5"/>
<polygon points="918.6,322.5 922.5,323 925.4,330 924.5,336 920.5,334 920,328"/>
<polygon points="882,299 887,293 893,290 896,292 894,298 889,303 884,304"/>
<polygon points="928,351.5 932,353 930,356"/>
</g>
<g fill="none" stroke="#e8f2fa" stroke-width="1"><polyline points="904.5,345.5 909,352 915.5,366.5"/><polyline points="919.8,345 924,349 928.3,352.5"/></g>
<g fill="none" stroke="#cdd0d3" stroke-width="0.55">
<polyline points="719.3,275 719.3,298"/>
<polyline points="737,319 760,319 778,318 786,322 795,322"/>
<polyline points="741,337 752,338 760,341 764,345"/>
<polyline points="858,343 862,352"/>
<polyline points="880,340 882,355"/>
<polyline points="895,344 895,355"/>
<polyline points="853,357 868,358 882,355 895,355 905,357"/>
<polyline points="897,355 897,370"/>
<polyline points="868,358 870,370"/>
<polyline points="882,355 884,371"/>
<polyline points="862,368 876,372 900,372 910,375"/>
<polyline points="884,385 898,383 905,380"/>
<polyline points="885,395 900,395 910,392"/>
<polyline points="887,405 900,404"/>
<polyline points="900,383 902,395"/>
<polyline points="915,318 925,318 940,313 955,318 968,318 975,323 990,322 1000,315 1007,320 1008,328"/>
<polyline points="920,336 935,328 945,332"/>
<polyline points="960,325 975,330 990,328"/>
<polyline points="942,338 955,342 965,345 975,348"/>
<polyline points="928,340 935,350"/>
<polyline points="930,335 942,340"/>
<polyline points="913,333 920,336"/>
<polyline points="877,315 885,313 893,310"/>
<polyline points="880,322 888,320 897,318"/>
<polyline points="885,327 893,325 900,322"/>
<polyline points="893,305 898,315 900,322"/>
<polyline points="905,300 910,310 915,318"/>
<polyline points="795,380 805,385 815,382"/>
<polyline points="792,395 803,398 812,395"/>
<polyline points="800,405 807,410"/>
<polyline points="796,420 800,415"/>
<polyline points="980,352 985,360"/>
<polyline points="975,355 982,350"/>
</g>
<circle cx="765.8" cy="333.7" r="11" fill="#0fa8ee" fill-opacity="0.65"/>
<rect x="778.2" y="327.9" width="19.6" height="12.8" fill="#1aa6ea"/>
<circle cx="887.6" cy="286.2" r="10.8" fill="#0fa8ee" fill-opacity="0.65"/>
<rect x="900.3" y="279.7" width="17.6" height="13.1" fill="#1aa6ea"/>
<circle cx="871.4" cy="322.8" r="9" fill="#0fa8ee" fill-opacity="0.65"/>
<rect x="881.7" y="316.6" width="18.3" height="12.4" fill="#1aa6ea"/>
<circle cx="952.2" cy="354.8" r="22.3" fill="#0fa8ee" fill-opacity="0.65"/>
<rect x="976" y="348.2" width="17.7" height="12.8" fill="#1aa6ea"/>
</svg>
<div class="a" style="left:745.8px;top:328.2px;width:40px;text-align:center;font-size:8.6px;color:#fff;line-height:11px">18</div>
<div class="a" style="left:778.2px;top:328.8px;width:19.6px;text-align:center;font-size:9px;color:#fff;line-height:11px">US</div>
<div class="a" style="left:867.6px;top:280.7px;width:40px;text-align:center;font-size:8.6px;color:#fff;line-height:11px">17</div>
<div class="a" style="left:900.3px;top:280.8px;width:17.6px;text-align:center;font-size:9px;color:#fff;line-height:11px">SE</div>
<div class="a" style="left:851.4px;top:317.3px;width:40px;text-align:center;font-size:8.6px;color:#fff;line-height:11px">5</div>
<div class="a" style="left:881.7px;top:317.3px;width:18.3px;text-align:center;font-size:9px;color:#fff;line-height:11px">FR</div>
<div class="a" style="left:932.2px;top:349.3px;width:40px;text-align:center;font-size:8.2px;color:#fff;line-height:11px">10,144</div>
<div class="a" style="left:976.0px;top:349.1px;width:17.7px;text-align:center;font-size:9px;color:#fff;line-height:11px">IN</div>
<div class="a" style="left:238.4px;top:236.5px;width:24px;height:24px;border-radius:5px;background:#eef5fc;border:1px solid #e4ecf4"></div>
<svg class="a" style="left:240px;top:239px" width="20" height="18" viewBox="240 239 20 18"><g stroke="#a3aab3" stroke-width="1.6"><path d="M245.2 241 V246.5 M245.2 249 V254.8 M250.2 241 V250.5 M250.2 253 V254.8 M255 241 V243 M255 246 V254.8"/><path d="M243.2 247.7 H247.2 M248.2 251.7 H252.2 M253 244.6 H257"/></g></svg>
<div class="a" style="left:1480px;top:208px;width:18.8px;height:19px;background:#fff;border:1px solid #e6e6e6"></div>
<svg class="a" style="left:1484px;top:212px" width="11" height="11" viewBox="0 0 11 11"><path d="M0.7 3.5 V0.7 H3.5 M7.5 0.7 H10.3 V3.5 M10.3 7.5 V10.3 H7.5 M3.5 10.3 H0.7 V7.5" stroke="#555" stroke-width="1.3" fill="none"/></svg>
<div class="a" style="left:1466.2px;top:229.9px;width:28.4px;height:27.5px;background:#6b9de1;border-radius:4px"></div>
<svg class="a" style="left:1472.5px;top:235px" width="16" height="16" viewBox="0 0 16 16"><circle cx="6.5" cy="6.5" r="4.3" stroke="#fff" stroke-width="2" fill="none" stroke-dasharray="20 5"/><path d="M9.5 9.5 L14 14" stroke="#fff" stroke-width="2.6" stroke-linecap="round"/><polygon points="1,2 4.5,2.5 2,5.5" fill="#fff"/></svg>
<div class="a" style="left:1466.2px;top:259.7px;width:28.4px;height:27px;background:#6b9de1;border-radius:4px"></div>
<div class="a" style="left:1466.2px;top:265px;width:28.4px;text-align:center;font-size:11px;color:#e8f0fb;line-height:14px">+</div>
<div class="a" style="left:1466.2px;top:288.6px;width:28.4px;height:27.6px;background:#6b9de1;border-radius:4px"></div>
<div class="a" style="left:1476.5px;top:302px;width:8px;height:1.3px;background:#e8f0fb"></div>
<svg class="a" style="left:1426px;top:368.5px" width="56" height="56" viewBox="0 0 56 56"><circle cx="28" cy="28" r="20.5" fill="none" stroke="#c2c4f2" stroke-width="14"/></svg>
<div class="a" style="left:1349px;top:431.5px;font-size:11.6px;color:#666;line-height:13px;letter-spacing:-0.1px">Unable to plot <b style="color:#444">1 country</b></div>
<svg class="a" style="left:1479px;top:425px" width="24" height="24" viewBox="0 0 24 24"><path d="M9 5 C5.5 5 3.5 8 4.5 11 L9 20 L13.5 11 C14.5 8 12.5 5 9 5Z" fill="#4a4a4a"/><circle cx="9" cy="10" r="2" fill="#e8f2fa"/><path d="M2 7 L16 19" stroke="#e8f2fa" stroke-width="2.2"/><path d="M2.5 6 L16.5 18" stroke="#4a4a4a" stroke-width="1.3"/></svg>
<div class="a" style="left:1491.5px;top:425px;width:12px;height:12px;border-radius:50%;background:#1e8ff0;color:#fff;font-size:8px;text-align:center;line-height:12px;font-weight:700">1</div>


<!-- TABLE PANEL -->
<div class="a" style="left:213.5px;top:482.8px;width:1310.5px;height:236px;background:#f3f6f8"></div>
<div class="a" style="left:223.8px;top:492.9px;width:1291.2px;height:37.3px;background:#cfe6ed"></div>
<div class="a" style="left:223.8px;top:530.2px;width:1291.2px;height:140.7px;background:#fff"></div>
<div class="a" style="left:223.8px;top:557.5px;width:1291.2px;height:1px;background:#e6e6e6"></div>
<div class="a" style="left:223.8px;top:586.7px;width:1291.2px;height:1px;background:#e6e6e6"></div>
<div class="a" style="left:223.8px;top:614.8px;width:1291.2px;height:1px;background:#e6e6e6"></div>
<div class="a" style="left:223.8px;top:644.1px;width:1291.2px;height:1px;background:#e6e6e6"></div>
<div class="a" style="left:428px;top:492.9px;width:1.2px;height:178px;background:#e3e8ea"></div>
<div class="a th" style="margin-top:-0.8px;left:232.2px;top:504px">Sign-in Time</div>
<svg class="a" style="left:418.9px;top:504px" width="3" height="11" viewBox="0 0 3 11"><circle cx="1.5" cy="1.5" r="1.2" fill="#13868f"/><circle cx="1.5" cy="5.5" r="1.2" fill="#13868f"/><circle cx="1.5" cy="9.5" r="1.2" fill="#13868f"/></svg>
<div class="a th" style="margin-top:-0.8px;left:435.7px;top:504px">Signed-in User</div>
<svg class="a" style="left:663.8px;top:504px" width="3" height="11" viewBox="0 0 3 11"><circle cx="1.5" cy="1.5" r="1.2" fill="#13868f"/><circle cx="1.5" cy="5.5" r="1.2" fill="#13868f"/><circle cx="1.5" cy="9.5" r="1.2" fill="#13868f"/></svg>
<div class="a th" style="margin-top:-0.8px;left:680.8px;top:504px">Signed-in Application Name</div>
<svg class="a" style="left:868.7px;top:504px" width="3" height="11" viewBox="0 0 3 11"><circle cx="1.5" cy="1.5" r="1.2" fill="#13868f"/><circle cx="1.5" cy="5.5" r="1.2" fill="#13868f"/><circle cx="1.5" cy="9.5" r="1.2" fill="#13868f"/></svg>
<div class="a th" style="margin-top:-0.8px;left:885.5px;top:504px">MFA Authentication Status</div>
<svg class="a" style="left:1072.5px;top:504px" width="3" height="11" viewBox="0 0 3 11"><circle cx="1.5" cy="1.5" r="1.2" fill="#13868f"/><circle cx="1.5" cy="5.5" r="1.2" fill="#13868f"/><circle cx="1.5" cy="9.5" r="1.2" fill="#13868f"/></svg>
<div class="a th" style="margin-top:-0.8px;left:1089.5px;top:504px">City</div>
<svg class="a" style="left:1277.0px;top:504px" width="3" height="11" viewBox="0 0 3 11"><circle cx="1.5" cy="1.5" r="1.2" fill="#13868f"/><circle cx="1.5" cy="5.5" r="1.2" fill="#13868f"/><circle cx="1.5" cy="9.5" r="1.2" fill="#13868f"/></svg>
<div class="a th" style="margin-top:-0.8px;left:1293.9px;top:504px">Device OS with Version</div>
<svg class="a" style="left:1481.0px;top:504px" width="3" height="11" viewBox="0 0 3 11"><circle cx="1.5" cy="1.5" r="1.2" fill="#13868f"/><circle cx="1.5" cy="5.5" r="1.2" fill="#13868f"/><circle cx="1.5" cy="9.5" r="1.2" fill="#13868f"/></svg>
<svg class="a" style="left:300px;top:508px" width="6" height="4" viewBox="0 0 6 4"><path d="M0.5 0.5 L3 3 L5.5 0.5" stroke="#13868f" stroke-width="1" fill="none"/></svg>
<div class="a td" style="left:232.2px;top:537.6px">5/3/2023 10:22:12 PM</div>
<div class="a td" style="left:435.7px;top:537.6px">leah.alsop@o365droid.onmicrosoft.com</div>
<div class="a td" style="left:680.8px;top:537.6px">Office365 Shell WCSS-Client</div>
<div class="a td" style="left:885.5px;top:537.6px">Not Configured</div>
<div class="a td" style="left:1089.5px;top:537.6px">Chennai</div>
<div class="a td" style="left:1293.9px;top:537.6px">Windows 10</div>
<div class="a td" style="left:1497.8px;top:537.6px;width:17.2px;overflow:hidden">Edg</div>
<div class="a td" style="left:232.2px;top:566.1px">5/3/2023 10:22:12 PM</div>
<div class="a td" style="left:435.7px;top:566.1px">leah.alsop@o365droid.onmicrosoft.com</div>
<div class="a td" style="left:680.8px;top:566.1px">Office365 Shell WCSS-Client</div>
<div class="a td" style="left:885.5px;top:566.1px">Not Configured</div>
<div class="a td" style="left:1089.5px;top:566.1px">Chennai</div>
<div class="a td" style="left:1293.9px;top:566.1px">Windows 10</div>
<div class="a td" style="left:1497.8px;top:566.1px;width:17.2px;overflow:hidden">Edg</div>
<div class="a td" style="left:232.2px;top:594.8px">5/3/2023 10:22:12 PM</div>
<div class="a td" style="left:435.7px;top:594.8px">leah.alsop@o365droid.onmicrosoft.com</div>
<div class="a td" style="left:680.8px;top:594.8px">Office365 Shell WCSS-Client</div>
<div class="a td" style="left:885.5px;top:594.8px">Not Configured</div>
<div class="a td" style="left:1089.5px;top:594.8px">Chennai</div>
<div class="a td" style="left:1293.9px;top:594.8px">Windows 10</div>
<div class="a td" style="left:1497.8px;top:594.8px;width:17.2px;overflow:hidden">Edg</div>
<div class="a td" style="left:232.2px;top:623.5px">5/3/2023 3:37:32 AM</div>
<div class="a td" style="left:435.7px;top:623.5px">ameliaben@o365droid.onmicrosoft.com</div>
<div class="a td" style="left:680.8px;top:623.5px">Microsoft Teams Web Client</div>
<div class="a td" style="left:885.5px;top:623.5px">Not Configured</div>
<div class="a td" style="left:1089.5px;top:623.5px">Chennai</div>
<div class="a td" style="left:1293.9px;top:623.5px">Windows 10</div>
<div class="a td" style="left:1497.8px;top:623.5px;width:17.2px;overflow:hidden">Chr</div>
<div class="a td" style="left:232.2px;top:652.5px">5/2/2023 1:59:15 PM</div>
<div class="a td" style="left:435.7px;top:652.5px">dave.joe@o365droid.onmicrosoft.com</div>
<div class="a td" style="left:680.8px;top:652.5px">Office365 Shell WCSS-Client</div>
<div class="a td" style="left:885.5px;top:652.5px">Succeeded</div>
<div class="a td" style="left:1089.5px;top:652.5px">Chennai</div>
<div class="a td" style="left:1293.9px;top:652.5px">Windows 10</div>
<div class="a td" style="left:1497.8px;top:652.5px;width:17.2px;overflow:hidden">Chr</div>

<!-- scrollbar -->
<div class="a" style="left:223.8px;top:670.8px;width:1291.2px;height:13px;background:#efefef"></div>
<div class="a" style="left:240.2px;top:670.8px;width:581.3px;height:17px;background:#c9c9c9"></div>
<svg class="a" style="left:227.5px;top:674.5px" width="7" height="10" viewBox="0 0 7 10"><path d="M6 1 L1.8 5 L6 9" stroke="#444" stroke-width="2" fill="none"/></svg>
<svg class="a" style="left:1503px;top:675px" width="6" height="9" viewBox="0 0 6 9"><path d="M1 0.8 L4.8 4.5 L1 8.2" stroke="#333" stroke-width="1.6" fill="none"/></svg>
<!-- footer -->
<div class="a" style="left:223.8px;top:683.8px;width:1291.2px;height:35px;background:#e5f1f6"></div>
<div class="a ft" style="left:1043px;top:696px">Go to Page</div>
<div class="a" style="left:1103.3px;top:694px;width:31px;height:16.4px;background:#fff;border:1px solid #e3e3e3;border-radius:2px"></div>
<div class="a" style="left:1107.5px;top:697px;font-size:10.5px;color:#666;line-height:11px">1</div>
<svg class="a" style="left:1122px;top:696px" width="7" height="12" viewBox="0 0 7 12"><path d="M1 4 L3.5 1.5 L6 4 M1 8 L3.5 10.5 L6 8" stroke="#888" stroke-width="1" fill="none"/></svg>
<svg class="a" style="left:1140px;top:698px" width="10" height="8" viewBox="0 0 10 8"><path d="M9 0.5 V4.5 H1.5 M3.5 2.2 L1.2 4.5 L3.5 6.8" stroke="#555" stroke-width="1.1" fill="none"/></svg>
<div class="a ft" style="left:1171.5px;top:696px">Page Size</div>
<div class="a" style="left:1224.8px;top:694px;width:31.8px;height:16.4px;background:#fff;border:1px solid #e3e3e3;border-radius:2px"></div>
<div class="a" style="left:1235px;top:697px;font-size:10.5px;color:#666;line-height:11px">20</div>
<div class="a ft" style="left:1282.2px;top:698.2px">Showing <span style="-webkit-text-stroke:0.3px #444;color:#444">1 - 20</span> of</div>
<div class="a" style="left:1368.8px;top:692.8px;font-size:16.5px;font-weight:400;-webkit-text-stroke:0.55px #444;color:#444;line-height:18px;letter-spacing:0.1px">10186</div>
<div class="a" style="left:1417.6px;top:698.5px;font-size:11.5px;color:#555;line-height:12px">Sign-Ins</div>

<div class="a" style="left:1419px;top:722px;width:114px;height:3px;background:#ea5a3c;border-radius:2px 2px 0 0"></div>
<div class="a" style="left:1515px;top:492.9px;width:9.5px;height:225.9px;background:#f3f6f8"></div>
<div class="a" style="left:1410px;top:695.5px;font-size:14px;color:rgba(150,150,150,.45);line-height:16px;letter-spacing:0.95px">admindroid.com</div>
<!-- column config -->
<div class="a" style="left:1489px;top:495px;width:41px;height:34px;background:#fff;border-radius:17px 3px 3px 17px;box-shadow:0.5px 0.5px 2px rgba(0,0,0,.15)"></div>
<svg class="a" style="left:1500px;top:502px" width="22" height="21" viewBox="0 0 22 21"><rect x="0.7" y="0.7" width="18" height="16.5" fill="none" stroke="#555" stroke-width="1.3"/><path d="M0.7 5 H18.7 M6.5 5 V17.2 M12.5 5 V11" stroke="#555" stroke-width="1.3"/><circle cx="16" cy="16" r="4.5" fill="#fff"/><circle cx="16" cy="16" r="2.6" fill="none" stroke="#555" stroke-width="1.5" stroke-dasharray="1.6 0.8"/></svg>

</body></html>
